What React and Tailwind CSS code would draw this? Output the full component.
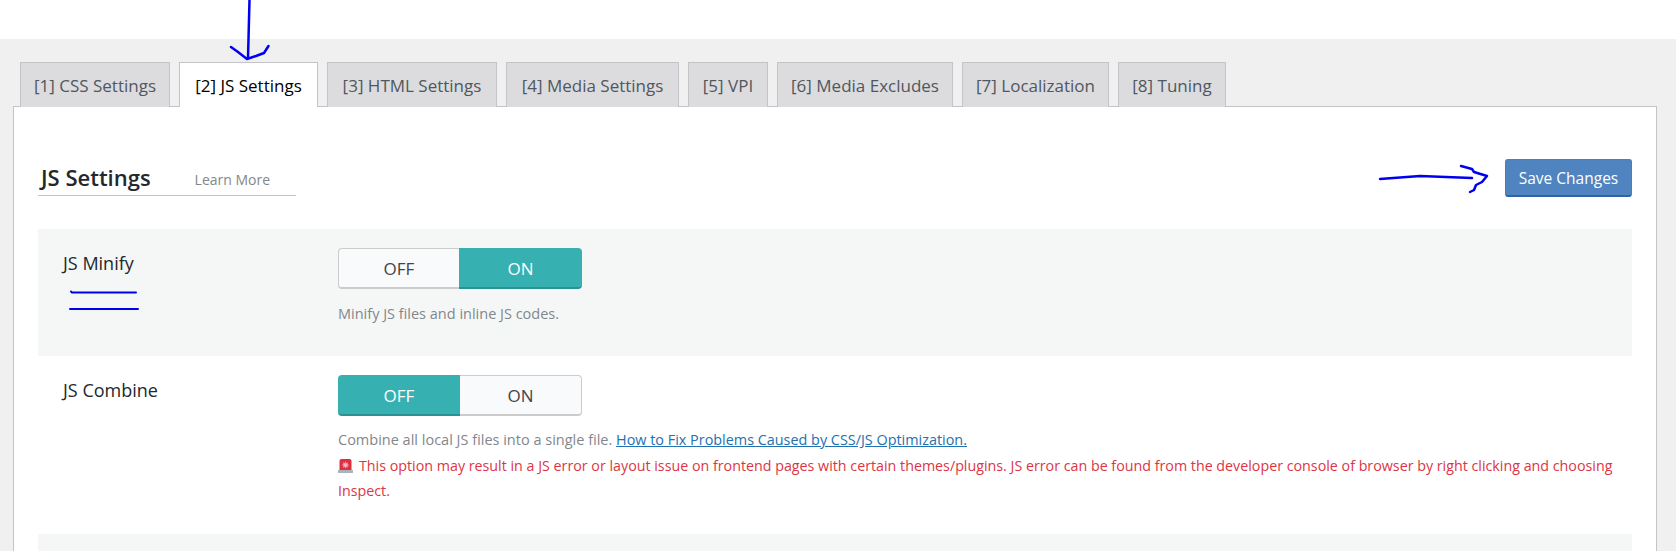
const FONT = "font-['Open_Sans','Noto_Sans',sans-serif]";

const tabs = [
  { label: "[1] CSS Settings", w: "w-[150px]" },
  { label: "[2] JS Settings", w: "w-[139px]", active: true },
  { label: "[3] HTML Settings", w: "w-[170px]" },
  { label: "[4] Media Settings", w: "w-[173px]" },
  { label: "[5] VPI", w: "w-[80px]" },
  { label: "[6] Media Excludes", w: "w-[176px]" },
  { label: "[7] Localization", w: "w-[147px]" },
  { label: "[8] Tuning", w: "w-[108px]" },
];

function Toggle({ on }) {
  return (
    <div className="flex w-[244px] h-[41px] text-[17px]">
      <div
        className={
          on
            ? "w-[121px] pt-[2px] flex items-center justify-center rounded-l-[4px] bg-[#f9fafc] border border-[#ccc] border-b-[2px] border-r-0 text-[#444]"
            : "w-[122px] pt-[2px] flex items-center justify-center rounded-l-[4px] bg-[#36b0b0] border-b-[2px] border-[#2a9292] text-white"
        }
      >
        OFF
      </div>
      <div
        className={
          on
            ? "flex-1 pt-[2px] flex items-center justify-center rounded-r-[4px] bg-[#36b0b0] border-b-[2px] border-[#2a9292] text-white"
            : "flex-1 pt-[2px] flex items-center justify-center rounded-r-[4px] bg-[#f9fafc] border border-[#ccc] border-b-[2px] border-l-0 text-[#444]"
        }
      >
        ON
      </div>
    </div>
  );
}

function Beacon() {
  return (
    <svg viewBox="0 0 15 15" className="inline-block w-[15px] h-[15px] mr-[6px] align-[-2px]">
      <rect x="0" y="12" width="15" height="3" fill="#a9b4bb" />
      <path d="M1.5 12V3A2 2 0 0 1 3.5 1h8a2 2 0 0 1 2 2V12z" fill="#dd2e44" />
      <path d="M7.5 3l.7 2.2 2.1-1-1 2.1 2.2.7-2.2.7 1 2.1-2.1-1-.7 2.2-.7-2.2-2.1 1 1-2.1L3.5 7l2.2-.7-1-2.1 2.1 1z" fill="#f4abba" />
    </svg>
  );
}

export default function App() {
  return (
    <div className={`relative h-[551px] w-[1676px] overflow-hidden bg-white ${FONT}`}>
      <div className="mt-[39px] h-[512px] bg-[#f0f0f1] pt-[23px] pl-[13px] pr-[19px] absolute inset-x-0 top-0">
        <div className="relative z-10 flex h-[45px] gap-[9px] pl-[7px] text-[17px]">
          {tabs.map((t) => (
            <div
              key={t.label}
              className={
                t.active
                  ? `${t.w} pt-[1px] flex items-center justify-center bg-white border border-b-0 border-[#c3c4c7] text-[#000]`
                  : `${t.w} pt-[1px] flex items-center justify-center bg-[#dcdcde] border border-b-0 border-[#c3c4c7] text-[#50575e]`
              }
            >
              {t.label}
            </div>
          ))}
        </div>
        <div className="-mt-px h-[600px] border border-[#c3c4c7] bg-white px-[24px] pt-[52px]">
          <div className="flex items-start justify-between">
            <div className="flex h-[37px] w-[258px] items-center border-b border-[#c3c4c7] pl-[3px]">
              <span className="text-[22px] font-semibold text-[#23282d]">JS Settings</span>
              <span className="ml-[44px] mt-[5px] text-[14px] text-[#82878c]">Learn More</span>
            </div>
            <button className="h-[38px] w-[127px] pt-[2px] rounded-[3px] border border-[#4a7fbd] border-b-[2px] border-b-[#2f63a3] bg-[#5084c0] text-[15.5px] text-white">
              Save Changes
            </button>
          </div>
          <div className="mt-[32px] flex h-[127px] bg-[#f5f7f7] pt-[19px]">
            <div className="w-[300px] pl-[25px] pt-[2px] text-[18px] font-medium text-[#23282d]">JS Minify</div>
            <div>
              <Toggle on />
              <p className="mt-[12px] text-[14.5px] leading-[25.6px] text-[#82878c]">Minify JS files and inline JS codes.</p>
            </div>
          </div>
          <div className="flex h-[178px] pt-[19px]">
            <div className="w-[300px] pl-[25px] pt-[2px] text-[18px] font-medium text-[#23282d]">JS Combine</div>
            <div className="flex-1 pr-[15px]">
              <Toggle />
              <p className="mt-[11px] text-[14.5px] leading-[25.6px] text-[#82878c]">
                Combine all local JS files into a single file.{" "}
                <a className="text-[14.4px] text-[#2271b1] underline">How to Fix Problems Caused by CSS/JS Optimization.</a>
              </p>
              <p className="text-[14.28px] leading-[25.6px] text-[#dc3545]">
                <Beacon />
                This option may result in a JS error or layout issue on frontend pages with certain themes/plugins. JS error can be found from the developer console of browser by right clicking and choosing Inspect.
              </p>
            </div>
          </div>
          <div className="h-[60px] bg-[#f5f7f7]" />
        </div>
      </div>
      <svg className="absolute inset-0 z-20 pointer-events-none" width="1676" height="551" fill="none" stroke="#0000f0" strokeWidth="2.5" strokeLinecap="round" strokeLinejoin="round">
        <path d="M249.5 0L248 58" />
        <path d="M231 47L238 52L247 59L256 56L264 53L268.5 46" />
        <path d="M1380 179L1420 176L1472 178" />
        <path d="M1461 166L1472 169L1474 172L1487 176L1482 182L1476 185L1474 190L1470 192" />
        <path d="M71 291.5L72 292.5H136" strokeWidth="2" />
        <path d="M70 309H138" strokeWidth="2" />
      </svg>
    </div>
  );
}
